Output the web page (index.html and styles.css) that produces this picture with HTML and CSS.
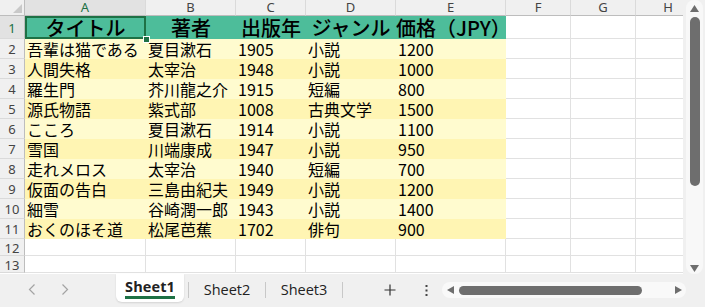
FILE: index.html
```html
<!DOCTYPE html>
<html lang="ja">
<head>
<meta charset="utf-8">
<title>Sheet</title>
<link rel="stylesheet" href="styles.css">
</head>
<body>
<div class="app">
  <div class="main">
    <div class="sheet">
      <div class="grid">
        <div class="corner"><span class="tri"></span></div>
        <div class="ch sel">A</div><div class="ch">B</div><div class="ch">C</div><div class="ch">D</div><div class="ch">E</div><div class="ch">F</div><div class="ch">G</div><div class="ch">H</div>

        <div class="rh sel">1</div>
        <div class="h active">タイトル<span class="handle"></span></div><div class="h">著者</div><div class="h">出版年</div><div class="h">ジャンル</div><div class="h">価格（JPY）</div><div class="c"></div><div class="c"></div><div class="c"></div>

        <div class="rh">2</div>
        <div class="d lt">吾輩は猫である</div><div class="d lt">夏目漱石</div><div class="d lt">1905</div><div class="d lt">小説</div><div class="d lt">1200</div><div class="c"></div><div class="c"></div><div class="c"></div>

        <div class="rh">3</div>
        <div class="d dk">人間失格</div><div class="d dk">太宰治</div><div class="d dk">1948</div><div class="d dk">小説</div><div class="d dk">1000</div><div class="c"></div><div class="c"></div><div class="c"></div>

        <div class="rh">4</div>
        <div class="d lt">羅生門</div><div class="d lt">芥川龍之介</div><div class="d lt">1915</div><div class="d lt">短編</div><div class="d lt">800</div><div class="c"></div><div class="c"></div><div class="c"></div>

        <div class="rh">5</div>
        <div class="d dk">源氏物語</div><div class="d dk">紫式部</div><div class="d dk">1008</div><div class="d dk">古典文学</div><div class="d dk">1500</div><div class="c"></div><div class="c"></div><div class="c"></div>

        <div class="rh">6</div>
        <div class="d lt">こころ</div><div class="d lt">夏目漱石</div><div class="d lt">1914</div><div class="d lt">小説</div><div class="d lt">1100</div><div class="c"></div><div class="c"></div><div class="c"></div>

        <div class="rh">7</div>
        <div class="d dk">雪国</div><div class="d dk">川端康成</div><div class="d dk">1947</div><div class="d dk">小説</div><div class="d dk">950</div><div class="c"></div><div class="c"></div><div class="c"></div>

        <div class="rh">8</div>
        <div class="d lt">走れメロス</div><div class="d lt">太宰治</div><div class="d lt">1940</div><div class="d lt">短編</div><div class="d lt">700</div><div class="c"></div><div class="c"></div><div class="c"></div>

        <div class="rh">9</div>
        <div class="d dk">仮面の告白</div><div class="d dk">三島由紀夫</div><div class="d dk">1949</div><div class="d dk">小説</div><div class="d dk">1200</div><div class="c"></div><div class="c"></div><div class="c"></div>

        <div class="rh">10</div>
        <div class="d lt">細雪</div><div class="d lt">谷崎潤一郎</div><div class="d lt">1943</div><div class="d lt">小説</div><div class="d lt">1400</div><div class="c"></div><div class="c"></div><div class="c"></div>

        <div class="rh">11</div>
        <div class="d dk">おくのほそ道</div><div class="d dk">松尾芭蕉</div><div class="d dk">1702</div><div class="d dk">俳句</div><div class="d dk">900</div><div class="c"></div><div class="c"></div><div class="c"></div>

        <div class="rh">12</div>
        <div class="c"></div><div class="c"></div><div class="c"></div><div class="c"></div><div class="c"></div><div class="c"></div><div class="c"></div><div class="c"></div>

        <div class="rh">13</div>
        <div class="c"></div><div class="c"></div><div class="c"></div><div class="c"></div><div class="c"></div><div class="c"></div><div class="c"></div><div class="c"></div>
      </div>
    </div>
    <div class="vscroll">
      <div class="vtrack">
        <svg class="varrow" width="9" height="7" viewBox="0 0 9 7"><polygon points="4.5,0 9,7 0,7" fill="#6e6e6e"/></svg>
        <div class="vthumb"></div>
        <div class="vspace"></div>
        <svg class="varrow" width="9" height="7" viewBox="0 0 9 7"><polygon points="0,0 9,0 4.5,7" fill="#6e6e6e"/></svg>
      </div>
    </div>
  </div>
  <div class="tabbar">
    <div class="nav">
      <svg class="chev" width="8" height="11" viewBox="0 0 8 11"><polyline points="6.5,0.5 1.5,5.5 6.5,10.5" fill="none" stroke="#a3a3a3" stroke-width="1.2"/></svg>
      <svg class="chev" width="8" height="11" viewBox="0 0 8 11"><polyline points="1.5,0.5 6.5,5.5 1.5,10.5" fill="none" stroke="#a3a3a3" stroke-width="1.2"/></svg>
    </div>
    <div class="tab active"><span class="tablabel">Sheet1</span></div>
    <div class="sep"></div>
    <div class="tab">Sheet2</div>
    <div class="sep"></div>
    <div class="tab">Sheet3</div>
    <div class="sep"></div>
    <div class="btn plus">
      <svg width="12" height="12" viewBox="0 0 12 12"><path d="M6 0.5V11.5M0.5 6H11.5" stroke="#333" stroke-width="1.2"/></svg>
    </div>
    <div class="btn more">
      <svg width="3" height="11" viewBox="0 0 3 11"><rect x="0.5" y="0" width="2" height="2" fill="#444"/><rect x="0.5" y="4.5" width="2" height="2" fill="#444"/><rect x="0.5" y="9" width="2" height="2" fill="#444"/></svg>
    </div>
    <div class="htrack">
      <svg width="7" height="8" viewBox="0 0 7 8"><polygon points="0,4 7,0 7,8" fill="#6e6e6e"/></svg>
      <div class="hthumb"></div>
      <div class="hspace"></div>
      <svg width="7" height="8" viewBox="0 0 7 8"><polygon points="7,4 0,0 0,8" fill="#6e6e6e"/></svg>
    </div>
  </div>
</div>
</body>
</html>
```

FILE: styles.css
```css
* { box-sizing: border-box; }

html, body {
  margin: 0;
  padding: 0;
  background: #f0f0f0;
}

body {
  width: 705px;
  height: 307px;
  overflow: hidden;
  font-family: "Noto Sans CJK JP", "Noto Sans", sans-serif;
}

.app {
  display: flex;
  flex-direction: column;
  width: 705px;
  height: 307px;
}

.main {
  display: flex;
  height: 274px;
}

.sheet {
  width: 683px;
  height: 274px;
  overflow: hidden;
  background: #ffffff;
}

.grid {
  display: grid;
  grid-template-columns: 25px 121px 90px 70px 90px 110px 65px 65px 65px;
  grid-template-rows: 16px 23px repeat(10, 20px) 17px 17px;
  width: 701px;
}

.corner {
  position: relative;
  background: #f0f0f0;
  border-right: 1px solid #bdbdbd;
  border-bottom: 1px solid #bdbdbd;
}

.corner .tri {
  position: absolute;
  right: 2px;
  bottom: 2px;
  width: 9px;
  height: 9px;
  background: #c9c9c9;
  clip-path: polygon(100% 0, 100% 100%, 0 100%);
}

.ch {
  background: #f0f0f0;
  border-right: 1px solid #dadada;
  border-bottom: 1px solid #bdbdbd;
  font-family: "Noto Sans", "Open Sans", sans-serif;
  font-size: 13px;
  line-height: 15px;
  color: #444444;
  text-align: center;
}

.ch.sel {
  background: #e2e2e2;
  color: #1e7145;
}

.rh {
  background: #f0f0f0;
  border-right: 1px solid #bdbdbd;
  border-bottom: 1px solid #dadada;
  font-family: "Noto Sans", "Open Sans", sans-serif;
  font-size: 13px;
  color: #444444;
  display: flex;
  align-items: center;
  justify-content: center;
  padding-top: 1px;
}

.rh.sel {
  background: #e2e2e2;
  color: #1e7145;
}

.c {
  border-right: 1px solid #e1e1e1;
  border-bottom: 1px solid #e1e1e1;
}

.h {
  background: #4dbd9a;
  color: #000000;
  font-size: 20px;
  font-weight: 500;
  line-height: 23px;
  text-align: center;
  white-space: nowrap;
  overflow: visible;
}

.h.active {
  position: relative;
  outline: 2px solid #1e7145;
  outline-offset: -2px;
  z-index: 2;
}

.h.active .handle {
  position: absolute;
  right: -4px;
  bottom: -4px;
  width: 7px;
  height: 7px;
  background: #1e7145;
  border: 1px solid #ffffff;
}

.d {
  color: #000000;
  font-size: 16px;
  line-height: 20px;
  padding-left: 2px;
  white-space: nowrap;
}

.d.lt { background: #fffbcf; }
.d.dk { background: #fff5b3; }

/* vertical scrollbar */
.vscroll {
  width: 22px;
  height: 274px;
  background: #f0f0f0;
  padding: 0 2px 0 3px;
}

.vtrack {
  height: 274px;
  background: #f8f8f8;
  border-radius: 8px;
  display: flex;
  flex-direction: column;
  align-items: center;
  padding: 5px 0 2px;
}

.varrow { flex: none; }

.vthumb {
  margin-top: 5px;
  width: 10px;
  height: 169px;
  background: #6e6e6e;
  border-radius: 5px;
}

.vspace { flex: 1; }

/* tab bar */
.tabbar {
  display: flex;
  align-items: flex-start;
  height: 33px;
  background: #f0f0f0;
  font-family: "Open Sans", "Noto Sans", sans-serif;
  font-size: 14.5px;
  color: #222222;
}

.nav {
  width: 116px;
  height: 28px;
  display: flex;
  align-items: center;
  padding-left: 28px;
  gap: 25px;
  padding-top: 2px;
}

.tab {
  height: 28px;
  width: 76px;
  display: flex;
  align-items: center;
  justify-content: center;
  padding-top: 2px;
}

.tab.active {
  width: 68px;
  background: #ffffff;
  border-radius: 0 0 6px 6px;
  box-shadow: 0 1px 2px rgba(0, 0, 0, 0.12);
  font-weight: 700;
  margin-right: 4px;
  flex-direction: column;
  justify-content: flex-end;
  padding-bottom: 3px;
}

.tablabel {
  border-bottom: 3px solid #1e7145;
  line-height: 18px;
  letter-spacing: 0.1px;
}

.sep {
  width: 1px;
  height: 16px;
  margin-top: 8px;
  background: #c8c8c8;
}

.btn {
  width: 30px;
  height: 33px;
  display: flex;
  align-items: center;
  justify-content: center;
  padding-bottom: 1px;
}

.plus { margin-left: 32px; }
.more { margin-left: 6px; }

.htrack {
  margin-left: 1px;
  margin-top: 8px;
  width: 244px;
  height: 16px;
  background: #f9f9f9;
  border-radius: 8px;
  display: flex;
  align-items: center;
  padding: 0 4px 0 5px;
}

.hthumb {
  margin-left: 5px;
  width: 183px;
  height: 9px;
  background: #6e6e6e;
  border-radius: 5px;
}

.hspace { flex: 1; }
```
